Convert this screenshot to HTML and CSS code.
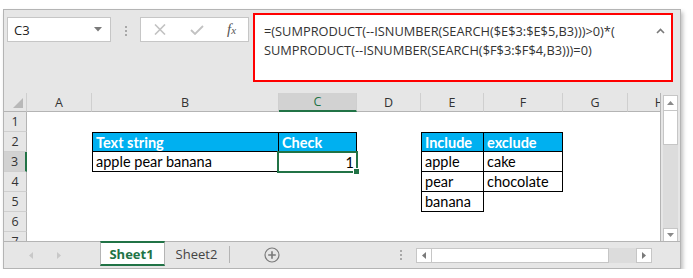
FILE: index.html
```html
<!DOCTYPE html>
<html>
<head>
<meta charset="utf-8">
<link rel="stylesheet" href="styles.css">
</head>
<body>
<div class="win">
  <div class="toolbar">
    <div class="namebox">
      <span class="nb-text">C3</span>
      <svg class="nb-arrow" width="8" height="5" viewBox="0 0 8 5"><path d="M0 0H8L4 4.5Z" fill="#7a7a7a"/></svg>
    </div>
    <div class="vdots"><i></i><i></i><i></i></div>
    <div class="fbtns">
      <svg width="12" height="11" viewBox="0 0 12 11"><path d="M1 0.5L11 10.5M11 0.5L1 10.5" stroke="#c2c2c2" stroke-width="1.6" fill="none"/></svg>
      <svg width="14" height="10" viewBox="0 0 14 10"><path d="M1 5L5 9L13 1" stroke="#c2c2c2" stroke-width="1.8" fill="none"/></svg>
      <span class="fx"><span class="fx-f">f</span><span class="fx-x">x</span></span>
    </div>
    <div class="formula">
      <div class="f-lines">
        <div>=(SUMPRODUCT(--ISNUMBER(SEARCH($E$3:$E$5,B3)))&gt;0)*(</div>
        <div>SUMPRODUCT(--ISNUMBER(SEARCH($F$3:$F$4,B3)))=0)</div>
      </div>
      <svg class="f-caret" width="9" height="6" viewBox="0 0 9 6"><path d="M1 5L4.5 1.5L8 5" stroke="#7a7a7a" stroke-width="1.6" fill="none"/></svg>
    </div>
  </div>

  <div class="sheet">
    <div class="grid">
      <div class="ch corner"><svg width="10" height="10" viewBox="0 0 10 10"><path d="M10 0V10H0Z" fill="#b8b8b8"/></svg></div>
      <div class="ch">A</div><div class="ch">B</div><div class="ch sel">C</div><div class="ch">D</div><div class="ch">E</div><div class="ch">F</div><div class="ch">G</div><div class="ch last"><span class="hcut">H</span></div>

      <div class="rh">1</div><div class="c"></div><div class="c"></div><div class="c"></div><div class="c"></div><div class="c"></div><div class="c"></div><div class="c"></div><div class="c"></div>

      <div class="rh">2</div><div class="c"></div>
      <div class="c hd bt bl">Text string</div><div class="c hd bt">Check</div>
      <div class="c"></div>
      <div class="c hd bt bl">Include</div><div class="c hd bt">exclude</div>
      <div class="c"></div><div class="c"></div>

      <div class="rh rsel">3</div><div class="c"></div>
      <div class="c bx bl">apple pear banana</div><div class="c bx num active">1<span class="handle"></span></div>
      <div class="c"></div>
      <div class="c bx bl">apple</div><div class="c bx">cake</div>
      <div class="c"></div><div class="c"></div>

      <div class="rh">4</div><div class="c"></div><div class="c"></div><div class="c"></div><div class="c"></div>
      <div class="c bx bl">pear</div><div class="c bx">chocolate</div>
      <div class="c"></div><div class="c"></div>

      <div class="rh">5</div><div class="c"></div><div class="c"></div><div class="c"></div><div class="c"></div>
      <div class="c bx bl">banana</div><div class="c"></div>
      <div class="c"></div><div class="c"></div>

      <div class="rh">6</div><div class="c"></div><div class="c"></div><div class="c"></div><div class="c"></div><div class="c"></div><div class="c"></div><div class="c"></div><div class="c"></div>
      <div class="rh">7</div><div class="c"></div><div class="c"></div><div class="c"></div><div class="c"></div><div class="c"></div><div class="c"></div><div class="c"></div><div class="c"></div>
    </div>
    <div class="vscroll">
      <div class="sbtn up"><svg width="7" height="4" viewBox="0 0 7 4"><path d="M0 4H7L3.5 0Z" fill="#8a8a8a"/></svg></div>
      <div class="vthumb"></div>
      <div class="vtrack"></div>
      <div class="sbtn down"><svg width="7" height="4" viewBox="0 0 7 4"><path d="M0 0H7L3.5 4Z" fill="#8a8a8a"/></svg></div>
    </div>
  </div>

  <div class="tabs">
    <div class="nav">
      <svg width="4" height="7" viewBox="0 0 4 7"><path d="M4 0V7L0 3.5Z" fill="#c8c8c8"/></svg>
      <svg width="4" height="7" viewBox="0 0 4 7"><path d="M0 0V7L4 3.5Z" fill="#c8c8c8"/></svg>
    </div>
    <div class="tab active">Sheet1</div>
    <div class="tab">Sheet2</div>
    <div class="tsep"></div>
    <div class="plus"><svg width="16" height="16" viewBox="0 0 16 16"><circle cx="8" cy="8" r="7" stroke="#7a7a7a" stroke-width="1.2" fill="none"/><path d="M8 4.2V11.8M4.2 8H11.8" stroke="#7a7a7a" stroke-width="1.6"/></svg></div>
    <div class="hdots"><i></i><i></i><i></i></div>
    <div class="hscroll">
      <div class="hbtn"><svg width="4" height="7" viewBox="0 0 4 7"><path d="M4 0V7L0 3.5Z" fill="#7a7a7a"/></svg></div>
      <div class="hthumb"></div>
      <div class="htrack"></div>
      <div class="hbtn"><svg width="4" height="7" viewBox="0 0 4 7"><path d="M0 0V7L4 3.5Z" fill="#7a7a7a"/></svg></div>
    </div>
  </div>
</div>
</body>
</html>
```

FILE: styles.css
```css
html, body {
  margin: 0;
  padding: 0;
  background: #fff;
}
body {
  padding: 9px 0 0 3px;
  font-family: "Open Sans", "Noto Sans", sans-serif;
}
.win {
  width: 676px;
  height: 258px;
  border: 1px solid #b4b4b4;
  background: #e6e6e6;
  box-shadow: 2px 3px 4px rgba(0,0,0,0.25);
  display: flex;
  flex-direction: column;
  overflow: hidden;
}

/* toolbar */
.toolbar {
  height: 83px;
  display: flex;
  align-items: flex-start;
  flex: none;
}
.namebox {
  margin: 7px 0 0 3px;
  height: 23px;
  background: #fff;
  border: 1px solid #c6c6c6;
  display: flex;
  align-items: center;
  justify-content: space-between;
  padding: 0 8px 0 6px;
  box-sizing: content-box;
  width: 88px;
}
.nb-text {
  font-size: 13px;
  color: #222;
}
.vdots {
  margin: 16px 0 0 14px;
  display: flex;
  flex-direction: column;
  gap: 2px;
}
.vdots i, .hdots i {
  display: block;
  width: 2px;
  height: 2px;
  background: #a8a8a8;
}
.fbtns {
  margin: 7px 0 0 13px;
  height: 23px;
  background: #fff;
  border: 1px solid #c6c6c6;
  display: flex;
  align-items: center;
  padding-left: 13px;
  gap: 24px;
  box-sizing: content-box;
  width: 94px;
}
.fx {
  font-family: "Liberation Serif", serif;
  font-style: italic;
  color: #555;
  font-size: 15px;
  margin-left: -1px;
  line-height: 1;
}
.fx-x {
  font-size: 11px;
}
.formula {
  margin: 3px 0 0 4px;
  width: 416px;
  height: 65px;
  border: 2px solid #f00;
  background: #fff;
  display: flex;
  justify-content: space-between;
  align-items: flex-start;
}
.f-lines {
  padding: 7px 0 0 9px;
  font-size: 12.8px;
  line-height: 19px;
  color: #333;
  white-space: nowrap;
}
.f-caret {
  margin: 13px 6px 0 0;
}

/* sheet */
.sheet {
  height: 148px;
  display: flex;
  flex: none;
}
.grid {
  display: grid;
  grid-template-columns: 23px 65px 187px 78px 64px 63px 79px 65px 32px;
  grid-template-rows: 19px repeat(7, 20px);
  height: 148px;
  overflow: hidden;
  background: #fff;
  border-right: 1px solid #b4b4b4;
  font-family: "Lato", "Open Sans", sans-serif;
  font-size: 14.5px;
}
.ch {
  background: #e6e6e6;
  border-right: 1px solid #cfcfcf;
  border-bottom: 1px solid #b4b4b4;
  display: flex;
  align-items: center;
  justify-content: center;
  font-family: "Open Sans", sans-serif;
  font-size: 12.5px;
  color: #333;
  box-sizing: border-box;
}
.ch.corner {
  justify-content: flex-end;
  align-items: flex-end;
  padding: 0 3px 3px 0;
}
.ch.sel {
  background: #d2d2d2;
  border-bottom: 2px solid #217346;
  color: #217346;
}
.ch.last {
  justify-content: flex-end;
  border-right: none;
  overflow: hidden;
}
.hcut {
  margin-right: -4px;
}
.rh {
  background: #e6e6e6;
  border-right: 1px solid #b4b4b4;
  border-bottom: 1px solid #cfcfcf;
  display: flex;
  align-items: center;
  justify-content: center;
  font-family: "Open Sans", sans-serif;
  font-size: 12.5px;
  color: #333;
  box-sizing: border-box;
}
.rh.rsel {
  background: #d2d2d2;
  border-right: 2px solid #217346;
}
.c {
  box-sizing: border-box;
  display: flex;
  align-items: center;
  padding: 0 3px;
  color: #000;
  white-space: nowrap;
  position: relative;
}
.bx, .hd {
  border-right: 1px solid #000;
  border-bottom: 1px solid #000;
}
.bt {
  border-top: 1px solid #000;
}
.bl {
  border-left: 1px solid #000;
}
.hd {
  background: #00b0f0;
  color: #fff;
  font-weight: bold;
}
.num {
  justify-content: flex-end;
}
.active {
  border: 2px solid #217346;
  margin: -1px -1px -1px -2px;
  padding-right: 2px;
}
.handle {
  position: absolute;
  right: -4px;
  bottom: -4px;
  width: 5px;
  height: 5px;
  background: #217346;
  border: 1px solid #fff;
}

.vscroll {
  width: 15px;
  margin-left: 2px;
  display: flex;
  flex-direction: column;
  padding-top: 2px;
}
.sbtn {
  height: 14px;
  background: #fff;
  border: 1px solid #c6c6c6;
  display: flex;
  align-items: center;
  justify-content: center;
  flex: none;
}
.vthumb {
  height: 33px;
  background: #fff;
  border: 1px solid #c6c6c6;
  border-top: none;
  flex: none;
}
.vtrack {
  flex: 1;
  background: #dcdcdc;
}
.sbtn.down {
  height: 12px;
  border-bottom: none;
}

/* tabs */
.tabs {
  flex: 1;
  border-top: 1px solid #b4b4b4;
  display: flex;
  align-items: stretch;
  font-size: 13px;
}
.nav {
  width: 98px;
  display: flex;
  align-items: center;
  gap: 24px;
  padding-left: 25px;
  box-sizing: border-box;
}
.tab {
  width: 65px;
  display: flex;
  align-items: center;
  justify-content: center;
  color: #444;
  box-sizing: border-box;
  padding-bottom: 2px;
}
.tab.active {
  background: #fff;
  margin-top: -1px;
  border-left: 1px solid #b4b4b4;
  border-right: 1px solid #b4b4b4;
  border-bottom: 2px solid #217346;
  color: #217346;
  font-weight: bold;
  height: 25px;
  padding-bottom: 0;
}
.tsep {
  width: 1px;
  background: #b4b4b4;
  margin: 4px 0 5px 0;
}
.plus {
  display: flex;
  align-items: center;
  margin-left: 34px;
}
.hdots {
  display: flex;
  flex-direction: column;
  gap: 2px;
  justify-content: center;
  margin-left: 120px;
}
.hscroll {
  display: flex;
  margin: 6px 0 0 14px;
  height: 15px;
}
.hbtn {
  width: 14px;
  height: 13px;
  background: #fff;
  border: 1px solid #c6c6c6;
  display: flex;
  align-items: center;
  justify-content: center;
}
.hthumb {
  width: 176px;
  height: 13px;
  background: #fff;
  border: 1px solid #c6c6c6;
  border-left: none;
}
.htrack {
  width: 27px;
  background: #dcdcdc;
}
```
